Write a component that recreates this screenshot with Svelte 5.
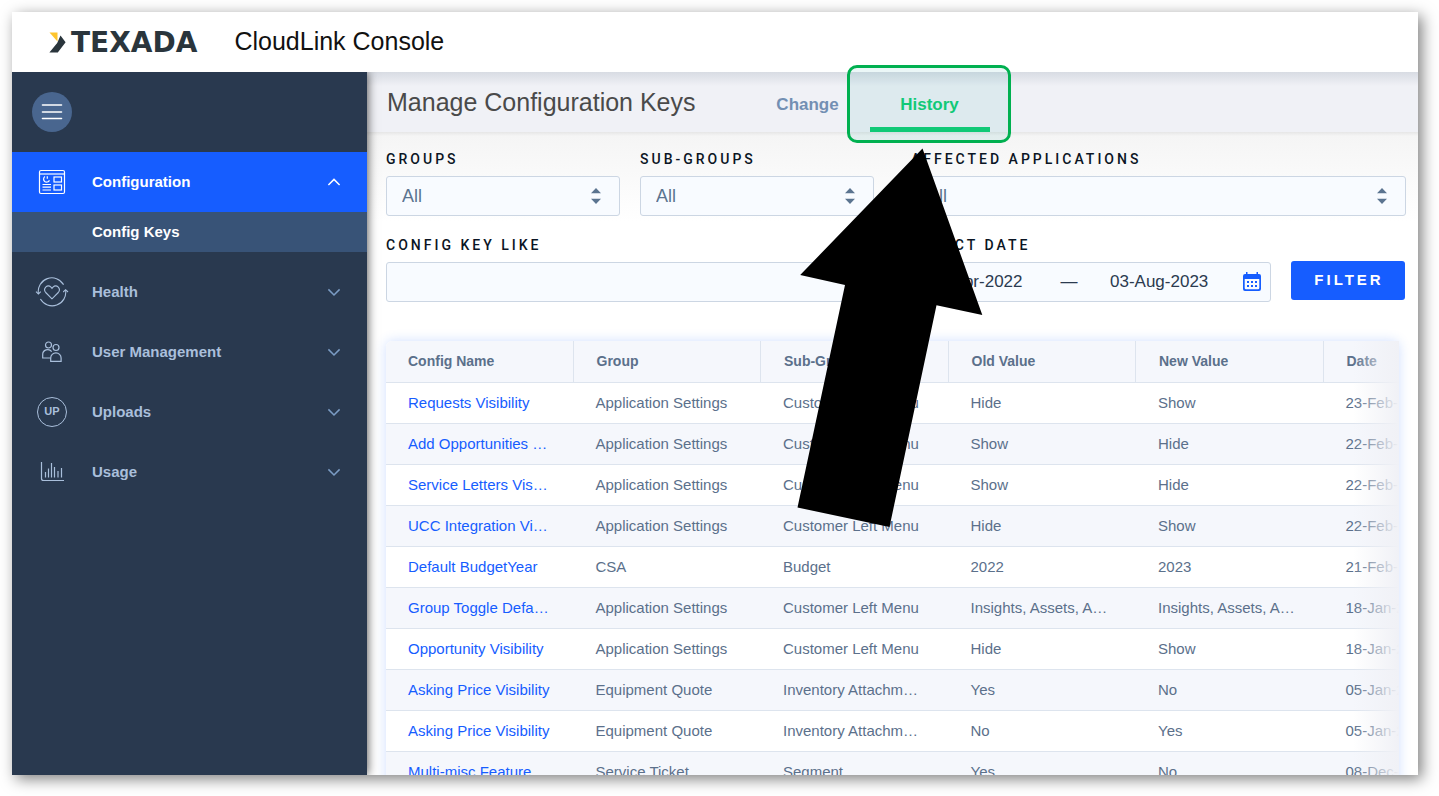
<script>
  const navItems = [
    { icon: 'health', label: 'Health' },
    { icon: 'users', label: 'User Management' },
    { icon: 'uploads', label: 'Uploads' },
    { icon: 'usage', label: 'Usage' }
  ];

  const columns = ['Config Name', 'Group', 'Sub-Group', 'Old Value', 'New Value', 'Date'];

  const rows = [
    ['Requests Visibility', 'Application Settings', 'Customer Left Menu', 'Hide', 'Show', '23-Feb-2023'],
    ['Add Opportunities …', 'Application Settings', 'Customer Left Menu', 'Show', 'Hide', '22-Feb-2023'],
    ['Service Letters Vis…', 'Application Settings', 'Customer Left Menu', 'Show', 'Hide', '22-Feb-2023'],
    ['UCC Integration Vi…', 'Application Settings', 'Customer Left Menu', 'Hide', 'Show', '22-Feb-2023'],
    ['Default BudgetYear', 'CSA', 'Budget', '2022', '2023', '21-Feb-2023'],
    ['Group Toggle Defa…', 'Application Settings', 'Customer Left Menu', 'Insights, Assets, A…', 'Insights, Assets, A…', '18-Jan-2023'],
    ['Opportunity Visibility', 'Application Settings', 'Customer Left Menu', 'Hide', 'Show', '18-Jan-2023'],
    ['Asking Price Visibility', 'Equipment Quote', 'Inventory Attachm…', 'Yes', 'No', '05-Jan-2023'],
    ['Asking Price Visibility', 'Equipment Quote', 'Inventory Attachm…', 'No', 'Yes', '05-Jan-2023'],
    ['Multi-misc Feature', 'Service Ticket', 'Segment', 'Yes', 'No', '08-Dec-2022']
  ];
</script>

{#snippet sorter()}
  <svg class="sorter" width="12" height="16" viewBox="0 0 12 16" aria-hidden="true">
    <path d="M6 0 11 5.3H1zM6 16l5-5.3H1z" fill="#5b7490" />
  </svg>
{/snippet}

{#snippet chevron(up)}
  <svg class="chevron" width="14" height="14" viewBox="0 0 14 14" fill="none" stroke="currentColor" stroke-width="1.5" aria-hidden="true">
    <path d={up ? 'M1.4 10 7 4.4 12.6 10' : 'M1.4 4.4 7 10l5.6-5.6'} />
  </svg>
{/snippet}

<div class="page">
  <div class="frame">
    <header class="topbar">
      <div class="logo">
        <svg width="17" height="21" viewBox="0 0 17 21" aria-hidden="true">
          <path d="M.5.5H8.500v9z" fill="#fdc42c" />
          <path d="M11.500 3.600 16.600 10.200 8.800 20.500H.4L8.200 11z" fill="#2a353c" />
        </svg>
        <span>TEXADA</span>
      </div>
      <div class="product">CloudLink Console</div>
    </header>

    <div class="body">
      <aside class="sidebar">
        <button class="burger" aria-label="Menu">
          <svg width="22" height="18" viewBox="0 0 22 18" stroke="#fff" stroke-width="1.600" stroke-linecap="round" aria-hidden="true">
            <path d="M1.5 2h19M1.5 9h19M1.5 15.500h19" />
          </svg>
        </button>
        <nav>
          <button class="item active">
            <span class="icon">
              <svg width="28" height="26" viewBox="0 0 28 26" fill="none" stroke="currentColor" stroke-width="1.2" aria-hidden="true">
                <rect x="1.500" y="1.500" width="25" height="23" rx="1.500" />
                <path d="M1.500 5h25" />
                <path d="M7 7.600a3 3 0 1 0 4.400 3.600M9.300 7.300v2.500" />
                <path d="M4.500 15.500h8.500M4.500 18.200h8.500M4.500 21h8.500" />
                <rect x="16" y="8" width="7.500" height="5" />
                <rect x="16" y="16" width="7.500" height="5" />
              </svg>
            </span>
            <span class="text">Configuration</span>
            {@render chevron(true)}
          </button>
          <a class="sub" href="#config-keys">Config Keys</a>
          {#each navItems as item}
            <button class="item">
              <span class="icon">
                {#if item.icon === 'health'}
                  <svg width="34" height="30" viewBox="0 0 34 30" fill="none" stroke="currentColor" stroke-width="1.100" aria-hidden="true">
                    <path d="M28.600 7.600A13.600 13.600 0 0 0 3.400 16.500M5.400 22A13.600 13.600 0 0 0 30.600 13" />
                    <path d="M1 14.700 3.400 17l2.400-2.300M28.200 15l2.400-2.300L33 15" />
                    <path d="M17 21.800 10.700 15.500a4 4 0 0 1 0-5.300 3.800 3.800 0 0 1 5.300 0l1 1.200 1-1.200a3.800 3.800 0 0 1 5.300 0 4 4 0 0 1 0 5.300z" />
                  </svg>
                {:else if item.icon === 'users'}
                  <svg width="22" height="22" viewBox="0 0 22 22" fill="none" stroke="currentColor" stroke-width="1.200" aria-hidden="true">
                    <circle cx="7.500" cy="4" r="3" />
                    <circle cx="15" cy="6.500" r="3" />
                    <path d="M9.500 17H1.700v-3.200a5 5 0 0 1 9-3.200" />
                    <path d="M9.700 20.400v-3.300a5.200 5.200 0 0 1 10.400 0v3.300z" />
                  </svg>
                {:else if item.icon === 'uploads'}
                  <span class="badge">UP</span>
                {:else}
                  <svg width="24" height="20" viewBox="0 0 24 20" fill="none" stroke="currentColor" stroke-width="1.200" aria-hidden="true">
                    <path d="M1.500 0v16.500q0 2 2 2H24" />
                    <path d="M5.500 10v5.500M8.500 6.500v9M11.500 1v14.500M14.500 5v10.500M18 9v6.500M21.500 6v9.500" />
                  </svg>
                {/if}
              </span>
              <span class="text">{item.label}</span>
              {@render chevron(false)}
            </button>
          {/each}
        </nav>
      </aside>

      <main class="main">
        <div class="titlebar">
          <h1>Manage Configuration Keys</h1>
          <div class="tabs">
            <a class="tab" href="#change">Change</a>
            <a class="tab current" href="#history">
              History
              <span class="highlight"></span>
              <svg class="pointer" width="190" height="384" viewBox="0 0 190 384" aria-hidden="true">
                <path d="M125.500.5 185.300 167l-45.800-9.800L92.500 379 .5 359.500 48 137 3.200 127z" />
              </svg>
            </a>
          </div>
        </div>

        <div class="content">
          <form class="filters" onsubmit={(e) => e.preventDefault()}>
            <div class="pair">
              <div class="field">
                <label for="groups">GROUPS</label>
                <div class="control">
                  <select id="groups"><option>All</option></select>
                  {@render sorter()}
                </div>
              </div>
              <div class="field">
                <label for="subgroups">SUB-GROUPS</label>
                <div class="control">
                  <select id="subgroups"><option>All</option></select>
                  {@render sorter()}
                </div>
              </div>
            </div>
            <div class="field">
              <label for="apps">AFFECTED APPLICATIONS</label>
              <div class="control">
                <select id="apps"><option>All</option></select>
                {@render sorter()}
              </div>
            </div>
            <div class="field">
              <label for="keylike">CONFIG KEY LIKE</label>
              <input id="keylike" type="text" />
            </div>
            <div class="pair end">
              <div class="field">
                <label for="from">SELECT DATE</label>
                <div class="range">
                  <input id="from" type="text" value="01-Apr-2022" />
                  <span>—</span>
                  <input type="text" value="03-Aug-2023" aria-label="End date" />
                  <button type="button" class="calendar" aria-label="Open calendar">
                    <svg width="20" height="20" viewBox="0 0 20 20" aria-hidden="true">
                      <path fill="#165dff" fill-rule="evenodd" d="M4 0h1.500v2h9V0H16v2h1q2 0 2 2v13q0 2-2 2H3q-2 0-2-2V4q0-2 2-2h1zM2.700 7v9q0 1.300 1.300 1.300h12q1.300 0 1.300-1.300V7z" />
                      <path fill="#165dff" d="M5 9h2v2H5zM9 9h2v2H9zM13 9h2v2h-2zM5 13h2v2H5zM9 13h2v2H9zM13 13h2v2h-2z" />
                    </svg>
                  </button>
                </div>
              </div>
              <button class="filter" type="submit">FILTER</button>
            </div>
          </form>

          <div class="results">
            <div class="scroller">
              <table>
                <thead>
                  <tr>
                    {#each columns as column}<th scope="col">{column}</th>{/each}
                  </tr>
                </thead>
                <tbody>
                  {#each rows as row}
                    <tr>
                      {#each row as cell, i}
                        <td>{#if i === 0}<a href="#key">{cell}</a>{:else}{cell}{/if}</td>
                      {/each}
                    </tr>
                  {/each}
                </tbody>
              </table>
            </div>
            <div class="fade"></div>
          </div>
        </div>
      </main>
    </div>
  </div>
</div>

<style>
  :global(body) {
    margin: 0;
    background: #fff;
  }

  * {
    box-sizing: border-box;
  }

  .page {
    height: 100vh;
    padding: 12px 21px 21px 12px;
    overflow: hidden;
    font-family: 'Liberation Sans', Arial, sans-serif;
  }

  .frame {
    height: 100%;
    display: flex;
    flex-direction: column;
    overflow: hidden;
    background: #fff;
    box-shadow: 4px 4px 14px rgba(0, 0, 0, 0.5);
  }

  button {
    border: 0;
    font-family: inherit;
    cursor: pointer;
  }

  .topbar {
    position: relative;
    z-index: 2;
    flex: none;
    height: 60px;
    padding-left: 37px;
    display: flex;
    align-items: center;
    gap: 37px;
    background: #fff;
  }

  .logo {
    display: flex;
    align-items: center;
    gap: 5px;
    color: #2a353c;
    font: bold 28px/34px 'DejaVu Sans', sans-serif;
  }

  .logo span {
    padding-top: 2px;
  }

  .product {
    padding-bottom: 2px;
    font-size: 25px;
    line-height: 32px;
    color: #111;
  }

  .body {
    flex: 1;
    min-height: 0;
    display: flex;
  }

  .sidebar {
    position: relative;
    z-index: 1;
    flex: none;
    width: 355px;
    background: #29394f;
    box-shadow: 0 0 10px rgba(0, 0, 0, 0.75);
  }

  .burger {
    display: flex;
    align-items: center;
    justify-content: center;
    width: 40px;
    height: 40px;
    margin: 20px;
    padding: 0;
    border-radius: 50%;
    background: #49668f;
  }

  .item {
    display: flex;
    align-items: center;
    width: 100%;
    height: 60px;
    padding: 0 26px 0 20px;
    background: none;
    color: #a9bfdb;
    font-size: 15px;
    font-weight: bold;
    text-align: left;
  }

  .item.active {
    background: #165dff;
    color: #fff;
  }

  .icon {
    flex: none;
    width: 40px;
    margin-right: 20px;
    display: flex;
    justify-content: center;
  }

  .text {
    flex: 1;
    padding-bottom: 2px;
  }

  .chevron {
    color: #7b9cc4;
  }

  .active .chevron {
    color: #fff;
  }

  .badge {
    width: 30px;
    height: 30px;
    border: 1px solid currentColor;
    border-radius: 50%;
    font-size: 11px;
    line-height: 27px;
    text-align: center;
  }

  .sub {
    display: block;
    height: 40px;
    margin-bottom: 10px;
    padding-left: 80px;
    background: #385377;
    color: #fff;
    font-size: 15px;
    font-weight: bold;
    line-height: 40px;
    text-decoration: none;
  }

  .main {
    flex: 1;
    min-width: 0;
    display: flex;
    flex-direction: column;
  }

  .titlebar {
    flex: none;
    display: flex;
    height: 60px;
    padding-left: 20px;
    background: linear-gradient(#d8dce3, #f0f1f6 14px);
  }

  h1 {
    margin: 0;
    color: #4a4a4a;
    font-size: 25px;
    font-weight: normal;
    line-height: 60px;
    white-space: nowrap;
  }

  .tabs {
    display: flex;
    gap: 2px;
    margin-left: 52px;
  }

  .tab {
    position: relative;
    width: 120px;
    border-bottom: 5px solid transparent;
    color: #738fb3;
    font-size: 17px;
    font-weight: bold;
    line-height: 66px;
    text-align: center;
    text-decoration: none;
  }

  .tab.current {
    border-color: #13ce75;
    color: #13ce75;
  }

  .highlight {
    position: absolute;
    z-index: 3;
    top: -7px;
    left: -23px;
    width: 164px;
    height: 78px;
    border: 3px solid #00b050;
    border-radius: 10px;
    background: rgba(0, 150, 155, 0.08);
  }

  .pointer {
    position: absolute;
    z-index: 3;
    top: 76px;
    left: -73px;
  }

  .content {
    flex: 1;
    min-height: 0;
    padding: 19px 12px 0 19px;
    background: linear-gradient(#e6e6e6, #f5f5f5 4px, #fff 90px);
  }

  .filters {
    display: grid;
    grid-template-columns: 488fr 495fr;
    gap: 21px 37px;
  }

  .pair {
    display: flex;
    gap: 20px;
  }

  .end {
    align-items: flex-end;
  }

  .field {
    flex: 1;
    min-width: 0;
  }

  label {
    display: block;
    margin-bottom: 9px;
    color: #0b1524;
    font: 500 14px/16px Roboto, sans-serif;
    letter-spacing: 3px;
    white-space: nowrap;
  }

  .control {
    position: relative;
  }

  .sorter {
    position: absolute;
    top: 12px;
    right: 18px;
    pointer-events: none;
  }

  select,
  .field > input,
  .range {
    display: block;
    width: 100%;
    height: 40px;
    padding: 0 15px;
    border: 1px solid #ccd6e3;
    border-radius: 3px;
    background: #f8fbff;
    color: #5b7490;
    font: 18px 'Liberation Sans', Arial, sans-serif;
    appearance: none;
  }

  .range {
    display: flex;
    align-items: center;
    padding: 0 8px 0 16px;
    color: #2b3a4f;
    font-size: 17px;
  }

  .range input {
    width: 100px;
    padding: 0;
    border: 0;
    background: none;
    color: inherit;
    font: inherit;
  }

  .range span {
    flex: 1;
    text-align: center;
  }

  .calendar {
    display: flex;
    margin-left: 32px;
    padding: 0;
    background: none;
  }

  .filter {
    width: 114px;
    height: 39px;
    margin: 0 1px 2px 0;
    padding: 0 0 2px 2px;
    border-radius: 3px;
    background: #165dff;
    color: #fff;
    font-size: 15px;
    font-weight: bold;
    letter-spacing: 3px;
  }

  .results {
    position: relative;
    margin: 39px 7px 0 0;
    border-radius: 6px;
    box-shadow: 0 0 12px rgba(40, 110, 255, 0.22);
  }

  .scroller {
    overflow: hidden;
    border-radius: 6px;
  }

  table {
    width: 1125px;
    min-width: 100%;
    table-layout: fixed;
    border-collapse: separate;
    border-spacing: 0;
  }

  th,
  td {
    height: 41px;
    padding: 0 0 2px 22px;
    border-bottom: 1px solid #dde4ee;
    background: #fff;
    color: #5b708b;
    font-size: 15px;
    text-align: left;
    white-space: nowrap;
  }

  th {
    height: 42px;
    border-right: 1px solid #dde4ee;
    background: #f5f7fc;
    font-size: 14px;
  }

  th + th {
    padding-left: 23px;
  }

  tbody tr:nth-child(even) td {
    background: #f5f7fc;
  }

  td a {
    color: #165dff;
    text-decoration: none;
  }

  .fade {
    position: absolute;
    top: 0;
    right: 0;
    bottom: 0;
    width: 46px;
    background: linear-gradient(90deg, rgba(240, 241, 246, 0), #f0f1f6);
  }
</style>
